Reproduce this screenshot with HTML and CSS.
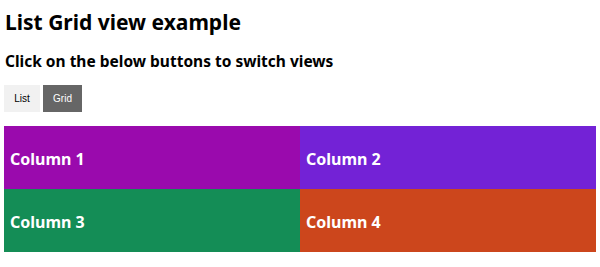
FILE: index.html
```html
<!DOCTYPE html>
<html>
<head>
<meta charset="utf-8">
<title>List Grid view example</title>
<link rel="stylesheet" href="styles.css">
</head>
<body>
	<h1>List Grid view example</h1>
	<h3>Click on the below buttons to switch views</h3>
	<div class="btns">
		<button class="btn">List</button>
		<button class="btn active">Grid</button>
	</div>
	<div class="row">
		<div class="col c1"><h2>Column 1</h2></div>
		<div class="col c2"><h2>Column 2</h2></div>
	</div>
	<div class="row">
		<div class="col c3"><h2>Column 3</h2></div>
		<div class="col c4"><h2>Column 4</h2></div>
	</div>
</body>
</html>
```

FILE: styles.css
```css
body{
	margin: 4px;
	font-family: "Noto Sans", "Open Sans", sans-serif;
	color: #000;
}
h1{font-size: 21px;margin: 4px 1px 0;line-height: 28px;}
h3{font-size: 15.5px;margin: 14px 1px 0;line-height: 22px;}
.btns{display: flex;gap: 3px;margin-top: 13px;}
.btn{
	border: none;
	outline: none;
	background: #f1f1f1;
	color: #000;
	font-family: "Liberation Sans", Arial, sans-serif;
	font-size: 10px;
	width: 36px;
	height: 27px;
	padding: 0;
}
.btn.active{background: #666;color: #fff;width: 39px;}
.row{display: flex;}
.btns + .row{margin-top: 14px;}
.col{flex: 1;height: 63px;display: flex;align-items: center;padding: 3px 6px 0;box-sizing: border-box;}
.col h2{margin: 0;color: #fff;font-size: 16px;}
.c1{background: #9a0aad;}
.c2{background: #7322d6;}
.c3{background: #148d56;}
.c4{background: #cc461c;}
```
